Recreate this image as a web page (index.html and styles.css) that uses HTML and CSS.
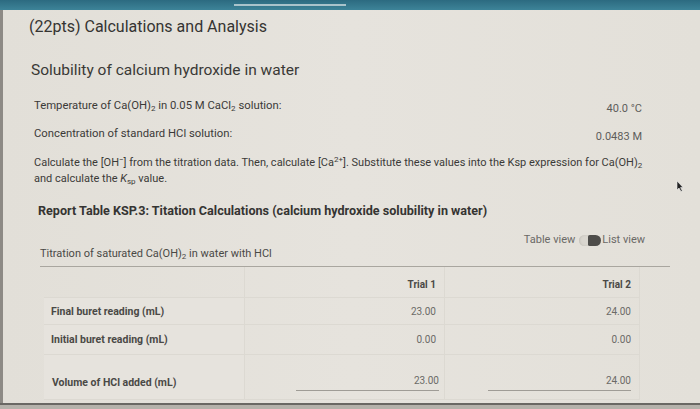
FILE: index.html
```html
<!DOCTYPE html>
<html>
<head>
<meta charset="utf-8">
<link rel="stylesheet" href="styles.css">
</head>
<body>
<div class="topbar"><span class="tab"></span></div>
<div class="page">
  <h1 class="title">(22pts) Calculations and Analysis</h1>
  <h2 class="subtitle">Solubility of calcium hydroxide in water</h2>
  <div class="field first">
    <span class="label">Temperature of Ca(OH)<sub>2</sub> in 0.05 M CaCl<sub>2</sub> solution:</span>
    <span class="value">40.0 °C</span>
  </div>
  <div class="field second">
    <span class="label">Concentration of standard HCl solution:</span>
    <span class="value">0.0483 M</span>
  </div>
  <p class="para">Calculate the [OH<sup>−</sup>] from the titration data. Then, calculate [Ca<sup>2+</sup>]. Substitute these values into the Ksp expression for Ca(OH)<sub>2</sub> and calculate the <i>K</i><sub>sp</sub> value.</p>
  <h3 class="report">Report Table KSP.3: Titation Calculations (calcium hydroxide solubility in water)</h3>
  <div class="viewtoggle">
    <span>Table view</span>
    <span class="switch"><span class="knob"></span></span>
    <span>List view</span>
  </div>
  <div class="caption">Titration of saturated Ca(OH)<sub>2</sub> in water with HCl</div>
  <div class="table">
    <div class="cell head lab"></div>
    <div class="cell head num">Trial 1</div>
    <div class="cell head num">Trial 2</div>

    <div class="cell lab r1">Final buret reading (mL)</div>
    <div class="cell num r1">23.00</div>
    <div class="cell num r1">24.00</div>

    <div class="cell lab r2">Initial buret reading (mL)</div>
    <div class="cell num r2">0.00</div>
    <div class="cell num r2">0.00</div>

    <div class="cell lab r3">Volume of HCl added (mL)</div>
    <div class="cell num r3"><span class="input in1">23.00</span></div>
    <div class="cell num r3"><span class="input in2">24.00</span></div>
  </div>
  <svg class="cursor" width="8" height="12" viewBox="0 0 8 12"><path d="M1 1 L1 10 L3 8 L5 11.5 L6.3 10.8 L4.5 7.6 L7 7.4 Z" fill="#222" stroke="#eee" stroke-width="0.6"/></svg>
</div>
<div class="bottom"></div>
</body>
</html>
```

FILE: styles.css
```css
html, body {
  margin: 0;
  padding: 0;
}
body {
  width: 700px;
  height: 409px;
  overflow: hidden;
  background: #e3e0d9;
  font-family: Roboto, "Liberation Sans", sans-serif;
  color: #3b3a38;
}
.topbar {
  height: 10px;
  background: linear-gradient(#2c6a80, #3d8398);
  position: relative;
}
.tab {
  position: absolute;
  left: 234px;
  top: 4px;
  width: 112px;
  height: 2px;
  background: #a9c3cb;
}
.page {
  position: relative;
  height: 393px;
  border-left: 3px solid #8d8a85;
  padding-left: 26px;
  box-sizing: border-box;
  background: linear-gradient(90deg, #e2dfd8 0%, #e6e3dd 50%, #e3e0d9 100%);
}
.title {
  margin: 0;
  padding-top: 7px;
  font-size: 16px;
  line-height: 20px;
  font-weight: 400;
  color: #353432;
}
.subtitle {
  margin: 23px 0 0 2px;
  font-size: 15.5px;
  line-height: 20px;
  font-weight: 400;
  color: #3a3936;
}
.field {
  display: flex;
  justify-content: space-between;
  margin-left: 5px;
  margin-right: 58px;
  font-size: 11.3px;
  line-height: 16px;
}
.field.first { margin-top: 18px; }
.field.second { margin-top: 12px; }
.value {
  position: relative;
  top: 3px;
  color: #5e5d5a;
  font-size: 11px;
}
sub, sup {
  font-size: 8px;
  line-height: 0;
  vertical-align: baseline;
  position: relative;
}
sub { top: 2px; }
sup { top: -4px; }
.para {
  margin: 13px 45px 0 5px;
  font-size: 11px;
  line-height: 16px;
}
.report {
  margin: 16px 0 0 9px;
  font-size: 12.6px;
  line-height: 16px;
  font-weight: 700;
  color: #353432;
}
.viewtoggle {
  display: flex;
  justify-content: flex-end;
  align-items: center;
  margin: 14px 55px 0 0;
  font-size: 11px;
  line-height: 14px;
  color: #6a6966;
}
.switch {
  position: relative;
  width: 22px;
  height: 11px;
  margin: 0 1px 0 4px;
  border-radius: 6px;
  background: #d9d6cf;
  box-shadow: 1px 0 2px #c4c1ba inset;
}
.knob {
  position: absolute;
  right: 0;
  top: 0;
  width: 13px;
  height: 11px;
  border-radius: 2px 6px 6px 2px;
  background: #4e4d4a;
}
.caption {
  margin: 0 30px 0 11px;
  padding-bottom: 5px;
  border-bottom: 1px solid #a9a69f;
  font-size: 11px;
  line-height: 14px;
  color: #4a4946;
}
.table {
  display: grid;
  grid-template-columns: 201px 200px 195px;
  grid-template-rows: 31px 27px 30px 45px;
  margin-left: 15px;
  width: 596px;
  font-size: 10px;
}
.cell {
  box-sizing: border-box;
  border-right: 1px solid #dcd9d2;
  border-bottom: 1px solid #dcd9d2;
  display: flex;
  align-items: center;
}
.cell.lab {
  padding-left: 7px;
  font-size: 10.5px;
  font-weight: 700;
  color: #4a4946;
  background: #e6e3dd;
}
.cell.num {
  justify-content: flex-end;
  padding-right: 8px;
  color: #6b6a67;
}
.cell.head {
  padding-top: 5px;
  font-weight: 700;
  color: #4a4946;
  background: transparent;
}
.cell.r3 {
  align-items: flex-start;
  padding-top: 20px;
}
.cell.lab.r3 {
  padding-top: 21px;
  padding-left: 8px;
}
.input {
  display: block;
  text-align: right;
  padding-bottom: 3px;
  border-bottom: 1px solid #9f9c96;
  line-height: 12px;
}
.in1 { width: 143px; margin-right: -3px; }
.in2 { width: 143px; margin-right: 0; }
.cursor {
  position: absolute;
  left: 673px;
  top: 170px;
}
.bottom {
  height: 6px;
  border-top: 2px solid #6a6864;
  background: #b5b2ab;
  box-sizing: border-box;
}
```
